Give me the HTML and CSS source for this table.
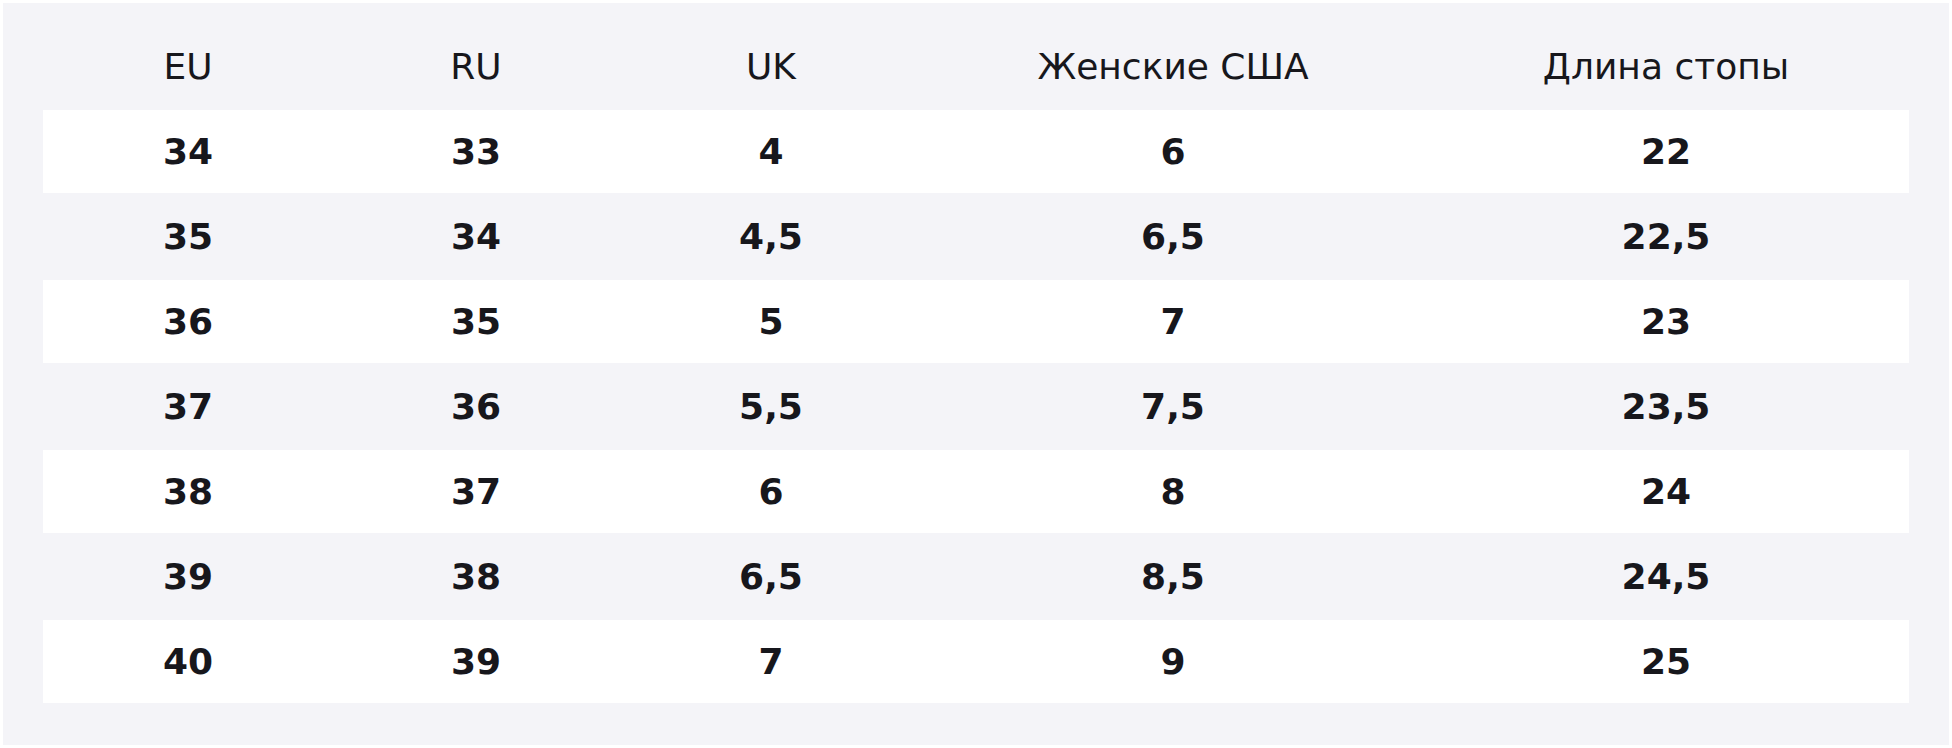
FILE: index.html
```html
<!DOCTYPE html>
<html lang="ru">
<head>
<meta charset="utf-8">
<title>Таблица размеров</title>
<link rel="stylesheet" href="styles.css">
</head>
<body>
<div class="frame">
  <div class="box">
    <table class="sizes">
      <colgroup>
        <col class="c1"><col class="c2"><col class="c3"><col class="c4"><col class="c5">
      </colgroup>
      <thead>
        <tr><th>EU</th><th>RU</th><th>UK</th><th>Женские США</th><th>Длина стопы</th></tr>
      </thead>
      <tbody>
        <tr class="odd"><td>34</td><td>33</td><td>4</td><td>6</td><td>22</td></tr>
        <tr><td>35</td><td>34</td><td>4,5</td><td>6,5</td><td>22,5</td></tr>
        <tr class="odd"><td>36</td><td>35</td><td>5</td><td>7</td><td>23</td></tr>
        <tr><td>37</td><td>36</td><td>5,5</td><td>7,5</td><td>23,5</td></tr>
        <tr class="odd"><td>38</td><td>37</td><td>6</td><td>8</td><td>24</td></tr>
        <tr><td>39</td><td>38</td><td>6,5</td><td>8,5</td><td>24,5</td></tr>
        <tr class="odd"><td>40</td><td>39</td><td>7</td><td>9</td><td>25</td></tr>
      </tbody>
    </table>
  </div>
</div>
</body>
</html>
```

FILE: styles.css
```css
html, body {
  margin: 0;
  padding: 0;
  background: #ffffff;
}

.frame {
  padding: 3px;
}

.box {
  background: #f4f4f8;
  padding: 20px 40px 41px;
  font-family: "DejaVu Sans", "Liberation Sans", sans-serif;
  color: #17171c;
}

.sizes {
  width: 100%;
  border-collapse: separate;
  border-spacing: 0;
  table-layout: fixed;
}

.c1 { width: 290px; }
.c2 { width: 286px; }
.c3 { width: 304px; }
.c4 { width: 500px; }
.c5 { width: 486px; }

.sizes th {
  height: 86px;
  padding: 0;
  font-size: 36px;
  font-weight: normal;
  text-align: center;
  vertical-align: middle;
}

.sizes td {
  box-sizing: border-box;
  height: 85px;
  padding: 0;
  border-top: 1px solid transparent;
  border-bottom: 1px solid transparent;
  background-clip: padding-box;
  font-size: 36px;
  font-weight: bold;
  text-align: center;
  vertical-align: middle;
}

.sizes tr.odd td {
  background-color: #ffffff;
}
```
